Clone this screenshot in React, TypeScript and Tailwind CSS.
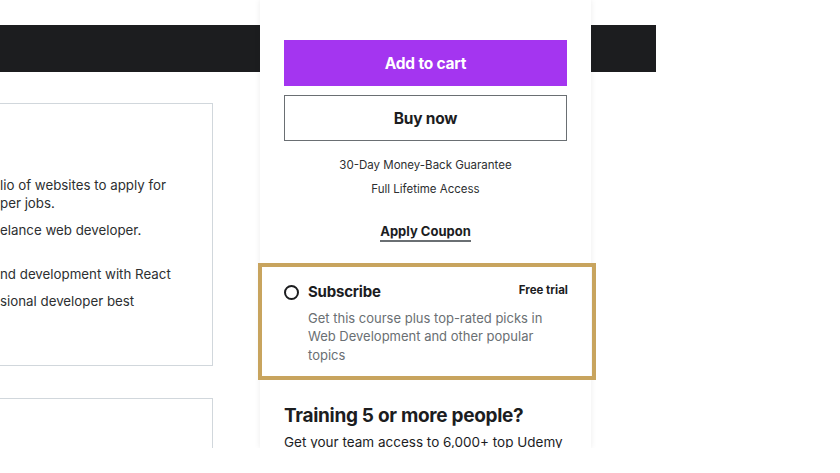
const font = { fontFamily: 'Inter, "Liberation Sans", sans-serif' }

function LeftColumn() {
  return (
    <div className="w-[213px] pt-[31px] text-[13.3px] leading-[18px] text-[#2d2f31]">
      <div className="h-[263px] border border-l-0 border-[#d1d7dc] pt-[72px]">
        <p className="whitespace-nowrap">lio of websites to apply for</p>
        <p className="whitespace-nowrap">per jobs.</p>
        <p className="mt-[9px] whitespace-nowrap">elance web developer.</p>
        <p className="mt-[26px] whitespace-nowrap">nd development with React</p>
        <p className="mt-[9px] whitespace-nowrap">sional developer best</p>
      </div>
      <div className="mt-[32px] h-[80px] border border-l-0 border-b-0 border-[#d1d7dc]" />
    </div>
  )
}

function Sidebar() {
  return (
    <div className="absolute left-[260px] top-0 h-full w-[331px] bg-white shadow-[0_0_6px_rgba(0,0,0,0.08)]">
      <div className="px-6 pt-[40px]">
        <button className="flex h-[46px] w-full items-center justify-center pt-[1px] bg-[#a435f0] text-[15.5px] font-bold tracking-[-0.2px] text-white">
          Add to cart
        </button>
        <button className="mt-[9px] flex h-[46px] w-full items-center justify-center pt-[1px] border border-[#6a6f73] text-[15.5px] font-bold tracking-[-0.2px] text-[#1c1d1f]">
          Buy now
        </button>
        <div className="mt-[15px] flex flex-col items-center gap-[6px] text-[11.5px] leading-[18px] text-[#2d2f31]">
          <span>30-Day Money-Back Guarantee</span>
          <span>Full Lifetime Access</span>
        </div>
        <div className="mt-[25px] flex justify-center">
          <span className="border-b-2 border-[#6a6f73] pb-[1px] text-[13px] font-bold leading-[16px] text-[#1c1d1f]">
            Apply Coupon
          </span>
        </div>
      </div>
      <div className="ml-[-2px] mr-[-5px] mt-[21px] h-[117px] border-4 border-[#c8a45e] pl-[22px] pr-[24px] pt-[14px]">
        <div className="flex items-center justify-between">
          <div className="flex items-center gap-[9px]">
            <span className="h-[15px] w-[15px] rounded-full border-2 border-[#1c1d1f]" />
            <span className="text-[15px] font-bold tracking-[-0.2px] text-[#1c1d1f]">Subscribe</span>
          </div>
          <span className="mt-[-4px] text-[11.5px] font-bold text-[#1c1d1f]">Free trial</span>
        </div>
        <p className="mt-[5px] pl-[24px] pr-[20px] text-[13px] leading-[18.5px] text-[#6a6f73]">
          Get this course plus top-rated picks in Web Development and other popular topics
        </p>
      </div>
      <div className="px-6 pt-[23px]">
        <h2 className="text-[19px] font-bold leading-[26px] tracking-[-0.3px] text-[#1c1d1f]">
          Training 5 or more people?
        </h2>
        <p className="mt-[3px] text-[13.5px] leading-[20px] text-[#1c1d1f]">
          Get your team access to 6,000+ top Udemy courses anytime, anywhere.
        </p>
      </div>
    </div>
  )
}

export default function App() {
  return (
    <div className="h-[473px] w-[840px] overflow-hidden bg-white" style={font}>
      <div className="relative h-[448px] w-[656px] overflow-hidden">
        <div className="mt-[25px] h-[47px] bg-[#1c1d1f]" />
        <LeftColumn />
        <Sidebar />
      </div>
    </div>
  )
}
